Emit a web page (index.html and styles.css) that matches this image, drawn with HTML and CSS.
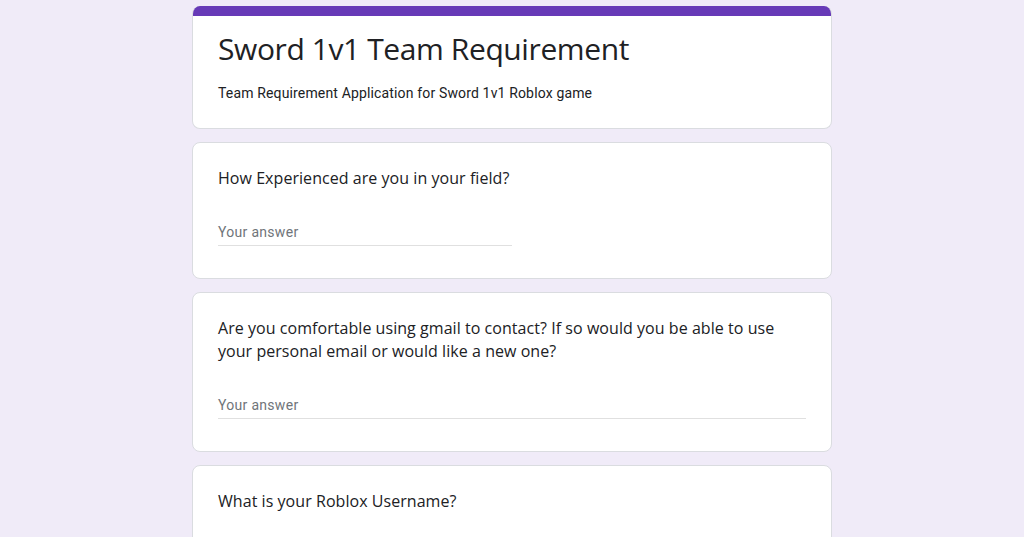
FILE: index.html
```html
<!DOCTYPE html>
<html lang="en">
<head>
<meta charset="utf-8">
<title>Sword 1v1 Team Requirement</title>
<link rel="stylesheet" href="styles.css">
</head>
<body>
<main class="form">
  <section class="card header-card">
    <div class="accent"></div>
    <div class="header-body">
      <h1 class="title">Sword 1v1 Team Requirement</h1>
      <p class="desc">Team Requirement Application for Sword 1v1 Roblox game</p>
    </div>
  </section>
  <section class="card question">
    <div class="q-text">How Experienced are you in your field?</div>
    <div class="answer short">Your answer</div>
  </section>
  <section class="card question">
    <div class="q-text">Are you comfortable using gmail to contact? If so would you be able to use your personal email or would like a new one?</div>
    <div class="answer long">Your answer</div>
  </section>
  <section class="card question">
    <div class="q-text">What is your Roblox Username?</div>
    <div class="answer short">Your answer</div>
  </section>
</main>
</body>
</html>
```
FILE: styles.css
```css
html, body {
  margin: 0;
  padding: 0;
  background: #f0ebf8;
}
body {
  font-family: Roboto, "Liberation Sans", Arial, sans-serif;
  color: #202124;
}
.form {
  width: 640px;
  margin: 0 auto;
  padding-top: 6px;
  display: flex;
  flex-direction: column;
  gap: 13px;
}
.card {
  background: #fff;
  border: 1px solid #dadce0;
  border-radius: 8px;
  box-sizing: border-box;
}
.header-card {
  overflow: hidden;
  border-top: none;
}
.accent {
  height: 10px;
  background: #673ab7;
}
.header-body {
  padding: 13px 25px 25px;
}
.title {
  margin: 0;
  font-family: "Open Sans", Inter, sans-serif;
  font-weight: 400;
  font-size: 30px;
  line-height: 40px;
  letter-spacing: -0.4px;
  color: #202124;
}
.desc {
  margin: 14px 0 0;
  font-size: 14px;
  line-height: 20px;
  letter-spacing: 0.15px;
  color: #202124;
}
.question {
  padding: 24px 25px 32px 25px;
}
.q-text {
  font-family: "Open Sans", Inter, sans-serif;
  font-size: 16px;
  line-height: 23.5px;
  letter-spacing: 0.05px;
  color: #202124;
}
.answer {
  margin-top: 29px;
  height: 26px;
  line-height: 25px;
  font-size: 14px;
  letter-spacing: 0.3px;
  color: #70757a;
  border-bottom: 1px solid rgba(0,0,0,0.12);
  box-sizing: border-box;
}
.answer.short {
  width: 50%;
}
```
